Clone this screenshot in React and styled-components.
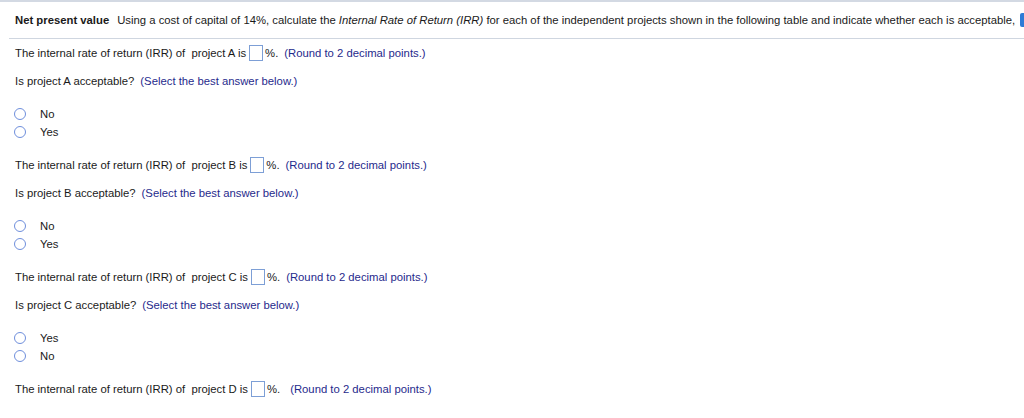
import React from "react";
import styled, {createGlobalStyle} from "styled-components";

const GlobalStyle = createGlobalStyle`
	html, body {
		margin: 0;
		padding: 0;
		background: #ffffff;
	}
	body {
		font-family: Arial, "Liberation Sans", Helvetica, sans-serif;
		font-size: 11.3px;
		color: #1a1a1a;
	}
`;

const Page = styled.div`
	width: 1024px;
	height: 418px;
	overflow: hidden;
	border-top: 2px solid #d3d9e3;
	box-sizing: border-box;
`;

const Header = styled.div`
	display: flex;
	align-items: center;
	height: 36px;
	margin-left: 9px;
	padding-left: 6px;
	border-bottom: 1px solid #cfd6e0;
	white-space: nowrap;
	overflow: hidden;
`;

const Title = styled.span`
	font-weight: bold;
	margin-right: 8px;
`;

const HelpTab = styled.span`
	display: inline-block;
	width: 10px;
	height: 14px;
	margin-left: 5px;
	background: #2e7bd6;
	border-radius: 2px 0 0 2px;
	flex-shrink: 0;
`;

const Body = styled.div`
	padding-left: 15px;
	padding-top: 6px;
`;

const Block = styled.div`
	display: flex;
	flex-direction: column;
`;

const Line = styled.div`
	display: flex;
	align-items: center;
	height: 16px;
	margin-bottom: ${p => p.$gap || 0}px;
	white-space: pre;
`;

const Blank = styled.span`
	display: inline-block;
	width: 12px;
	height: 14px;
	border: 1px solid #7d9fd6;
	margin: 0 2px 0 3px;
	background: #fff;
`;

const Hint = styled.span`
	color: #1f2a8c;
	margin-left: ${p => p.$gap || 6}px;
`;

const Options = styled.div`
	display: flex;
	flex-direction: column;
	gap: 6px;
	margin-bottom: 19px;
`;

const Option = styled.label`
	display: flex;
	align-items: center;
	height: 12px;
`;

const Radio = styled.span`
	display: inline-block;
	width: 10px;
	height: 10px;
	border: 1.5px solid #6f8fdc;
	border-radius: 50%;
	margin-right: 14px;
	margin-left: -1px;
`;

const projects = [
	{name: "A", options: ["No", "Yes"]},
	{name: "B", options: ["No", "Yes"]},
	{name: "C", options: ["Yes", "No"]},
];

function IrrLine({name, gap, hintGap}) {
	return <Line $gap={gap}>
		The internal rate of return (IRR) of  project {name} is<Blank/>%.<Hint $gap={hintGap}>(Round to 2 decimal points.)</Hint>
	</Line>;
}

export default function App() {
	return <>
		<GlobalStyle/>
		<Page>
			<Header>
				<Title>Net present value</Title>
				Using a cost of capital of 14%, calculate the <i>&nbsp;Internal Rate of Return (IRR)&nbsp;</i> for each of the independent projects shown in the following table and indicate whether each is acceptable,
				<HelpTab/>
			</Header>
			<Body>
				{projects.map(p => (
					<Block key={p.name}>
						<IrrLine name={p.name} gap={12}/>
						<Line $gap={19}>
							Is project {p.name} acceptable?<Hint $gap={6}>(Select the best answer below.)</Hint>
						</Line>
						<Options>
							{p.options.map(o => (
								<Option key={o}>
									<Radio/>{o}
								</Option>
							))}
						</Options>
					</Block>
				))}
				<IrrLine name="D" hintGap={10}/>
			</Body>
		</Page>
	</>;
}
